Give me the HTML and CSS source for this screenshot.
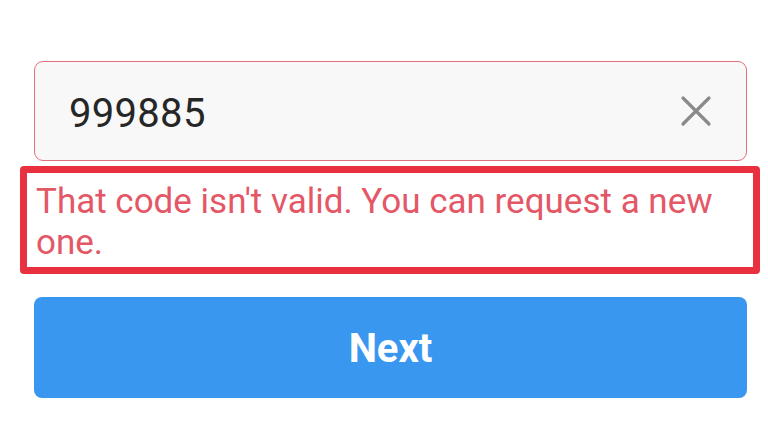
FILE: index.html
```html
<!DOCTYPE html>
<html lang="en">
<head>
  <meta charset="UTF-8">
  <title>Confirm code</title>
  <link rel="stylesheet" href="styles.css">
</head>
<body>
  <div class="page">
    <!-- Code field -->
    <div class="field">
      <span class="field-value">999885</span>
      <svg class="clear" width="32" height="32" viewBox="0 0 32 32">
        <path d="M3 3 L29 29 M29 3 L3 29" stroke="#8a8a8a" stroke-width="3.2" stroke-linecap="round" fill="none"/>
      </svg>
    </div>

    <!-- Error message -->
    <div class="error-box">
      <p class="error">That code isn't valid. You can request a new one.</p>
    </div>

    <button class="next">Next</button>
  </div>
</body>
</html>
```

FILE: styles.css
```css
body {
  margin: 0;
  padding: 0;
  background: #fff;
  font-family: Roboto, 'Noto Sans', sans-serif;
}

.page {
  padding-top: 61px;
  width: 768px;
  height: 432px;
  box-sizing: border-box;
  overflow: hidden;
}

/* Code input */
.field {
  margin-left: 34px;
  width: 713px;
  height: 100px;
  box-sizing: border-box;
  border: 1.5px solid #e2707c;
  border-radius: 9px;
  background: #f8f8f8;
  display: flex;
  align-items: center;
  justify-content: space-between;
  padding: 4px 34px 0 34px;
}

.field-value {
  font-size: 40px;
  color: #262626;
  letter-spacing: 0.3px;
}

.clear {
  margin-top: -4px;
}

/* Highlighted error */
.error-box {
  margin: 5px 0 0 20px;
  width: 740px;
  box-sizing: border-box;
  border: 7px solid #e8303f;
  border-radius: 4px;
  padding: 8px 9px 4px 9px;
}

.error {
  margin: 0;
  font-size: 35px;
  line-height: 41px;
  color: #e45766;
}

button.next {
  display: block;
  margin: 23px 0 0 34px;
  width: 713px;
  height: 101px;
  padding-top: 3px;
  border: none;
  border-radius: 8px;
  background: #3a97ef;
  color: #fff;
  font-family: Roboto, sans-serif;
  font-size: 40px;
  font-weight: bold;
}
```
